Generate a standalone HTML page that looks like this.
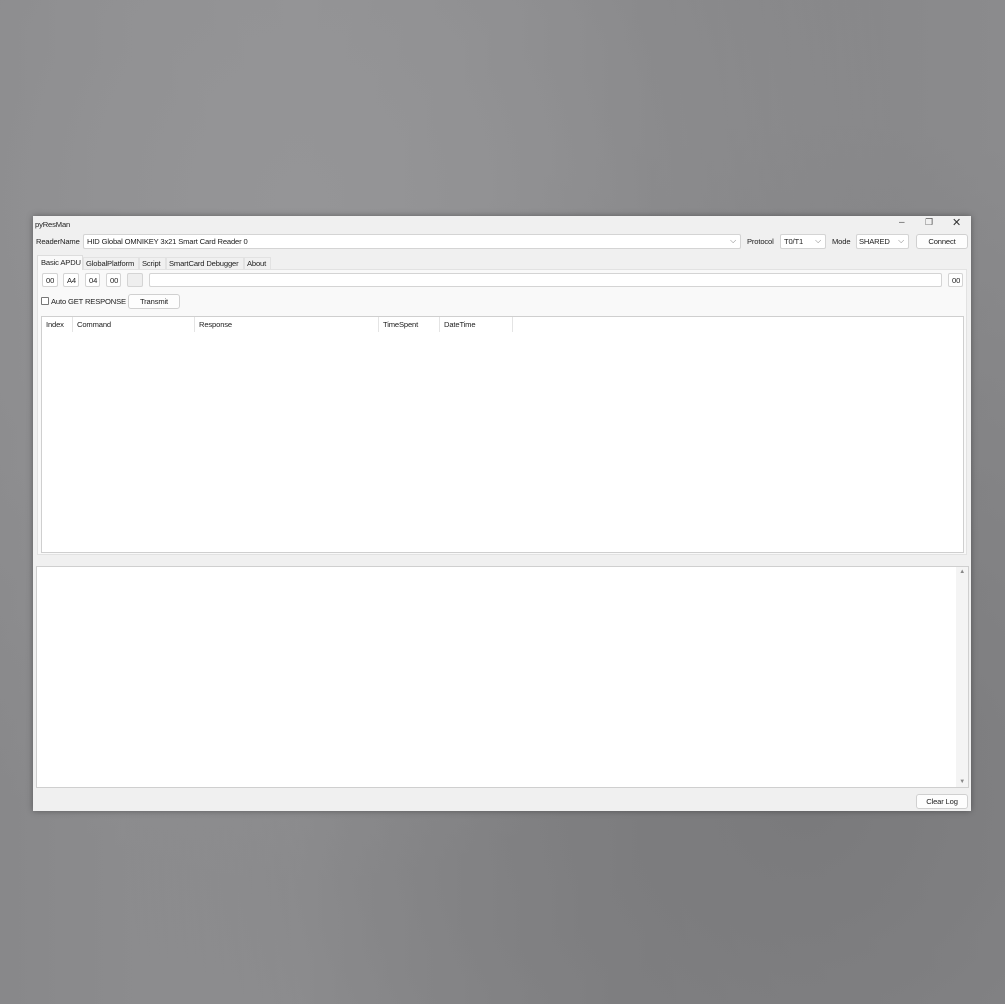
<!DOCTYPE html>
<html><head><meta charset="utf-8"><style>
*{box-sizing:border-box;margin:0;padding:0}
body{width:1005px;height:1004px;position:relative;overflow:hidden;font-family:"Liberation Sans",sans-serif;font-size:7.6px;letter-spacing:-0.15px;color:#222;
background:radial-gradient(ellipse at 30% 20%,#959597 0%,transparent 60%),radial-gradient(ellipse at 80% 80%,#7a7a7c 0%,transparent 60%),linear-gradient(90deg,#88888a,#909092 30%,#848486,#8b8b8d);}
.a{position:absolute}
.win{left:33px;top:216px;width:938px;height:595px;background:#f0f0f0;box-shadow:0 0 6px rgba(0,0,0,.35)}
.box{position:absolute;background:#fff;border:1px solid #d4d4d4;border-radius:2px}
.btn{position:absolute;background:#fdfdfd;border:1px solid #d0d0d0;border-radius:3px;text-align:center;line-height:13px}
.t{position:absolute;white-space:nowrap}
.chev{position:absolute;right:4px;top:1px;color:#777;font-size:8px}
.hd{position:absolute;top:0;height:15px;line-height:15px;padding-left:4px;border-right:1px solid #e4e4e4}
.tab{position:absolute;top:41px;height:13px;background:#f0f0f0;border:1px solid #e2e2e2;border-bottom:none;line-height:12px;padding-left:2px}
</style></head><body>
<div class="a win">
 <div class="t" style="left:2px;top:4px">pyResMan</div>
 <div class="t" style="left:866px;top:1px;font-size:10px;color:#555">–</div>
 <div class="t" style="left:892px;top:1px;font-size:9px;color:#555">❐</div>
 <div class="t" style="left:919px;top:0px;font-size:11px;color:#333">✕</div>
 <div class="t" style="left:3px;top:21px">ReaderName</div>
 <div class="box" style="left:50px;top:18px;width:658px;height:15px"><span class="t" style="left:3px;top:2px">HID Global OMNIKEY 3x21 Smart Card Reader 0</span><span class="chev">⌵</span></div>
 <div class="t" style="left:714px;top:21px">Protocol</div>
 <div class="box" style="left:747px;top:18px;width:46px;height:15px"><span class="t" style="left:3px;top:2px">T0/T1</span><span class="chev">⌵</span></div>
 <div class="t" style="left:799px;top:21px">Mode</div>
 <div class="box" style="left:823px;top:18px;width:53px;height:15px"><span class="t" style="left:2px;top:2px">SHARED</span><span class="chev">⌵</span></div>
 <div class="btn" style="left:883px;top:18px;width:52px;height:15px">Connect</div>
 <div class="tab" style="left:50px;width:56px">GlobalPlatform</div>
 <div class="tab" style="left:106px;width:27px">Script</div>
 <div class="tab" style="left:133px;width:78px">SmartCard Debugger</div>
 <div class="tab" style="left:211px;width:27px">About</div>
 <div class="a" style="left:4px;top:53px;width:930px;height:286px;background:#f9f9f9;border:1px solid #e2e2e2"></div>
 <div class="a" style="left:4px;top:39px;width:46px;height:15px;background:#f9f9f9;border:1px solid #ddd;border-bottom:none;line-height:13px;padding-left:3px">Basic APDU</div>
 <div class="box" style="left:9px;top:57px;width:16px;height:14px"><span class="t" style="left:3px;top:2px">00</span></div>
 <div class="box" style="left:30px;top:57px;width:16px;height:14px"><span class="t" style="left:3px;top:2px">A4</span></div>
 <div class="box" style="left:52px;top:57px;width:15px;height:14px"><span class="t" style="left:3px;top:2px">04</span></div>
 <div class="box" style="left:73px;top:57px;width:15px;height:14px"><span class="t" style="left:3px;top:2px">00</span></div>
 <div class="box" style="left:94px;top:57px;width:16px;height:14px;background:#eee"></div>
 <div class="box" style="left:116px;top:57px;width:793px;height:14px"></div>
 <div class="box" style="left:915px;top:57px;width:15px;height:14px"><span class="t" style="left:3px;top:2px">00</span></div>
 <div class="a" style="left:8px;top:81px;width:8px;height:8px;border:1px solid #777;background:#fff;border-radius:1px"></div>
 <div class="t" style="left:18px;top:81px">Auto GET RESPONSE</div>
 <div class="btn" style="left:95px;top:78px;width:52px;height:15px">Transmit</div>
 <div class="a" style="left:8px;top:100px;width:923px;height:237px;background:#fff;border:1px solid #cfcfcf">
  <div class="hd" style="left:0;width:31px">Index</div>
  <div class="hd" style="left:31px;width:122px">Command</div>
  <div class="hd" style="left:153px;width:184px">Response</div>
  <div class="hd" style="left:337px;width:61px">TimeSpent</div>
  <div class="hd" style="left:398px;width:73px">DateTime</div>
 </div>
 <div class="a" style="left:3px;top:350px;width:933px;height:222px;background:#fff;border:1px solid #cfcfcf">
  <div class="a" style="right:0;top:0;width:12px;height:220px;background:#f4f4f4"></div>
  <div class="t" style="right:3px;top:2px;font-size:6px;color:#888">▲</div>
  <div class="t" style="right:3px;bottom:2px;font-size:6px;color:#888">▼</div>
 </div>
 <div class="btn" style="left:883px;top:578px;width:52px;height:15px">Clear Log</div>
</div>
</body></html>
